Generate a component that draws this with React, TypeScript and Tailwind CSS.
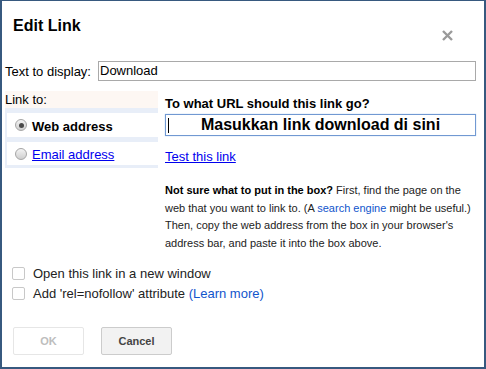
import React from "react";

function Radio({ checked }: { checked?: boolean }) {
  return (
    <span className="w-[12px] h-[12px] rounded-full border border-[#a6a6a6] bg-gradient-to-b from-[#f4f4f4] to-[#cfcfcf] flex items-center justify-center shrink-0">
      {checked && <span className="w-[5px] h-[5px] rounded-full bg-[#4a4a4a]" />}
    </span>
  );
}

function Checkbox() {
  return <span className="w-[13px] h-[13px] border border-[#c8c8c8] rounded-[2px] bg-white shrink-0" />;
}

export default function App() {
  return (
    <div className="w-[486px] h-[369px] bg-white border-[#37597f] border-t border-x-2 border-b-2 font-['Liberation_Sans',Arial,sans-serif] text-[13px] text-black">
      {/* Header */}
      <div className="h-[33px] flex items-start justify-between pl-[11px] pr-[31px]">
        <h1 className="mt-[15px] text-[16px] leading-[20px] font-bold">Edit Link</h1>
        <button type="button" className="mt-[29px] w-[11px] h-[11px]">
          <svg width="11" height="11" viewBox="0 0 11 11">
            <path d="M1 1 L10 10 M10 1 L1 10" stroke="#9a9a9a" strokeWidth="2.4" />
          </svg>
        </button>
      </div>

      {/* Text to display */}
      <div className="mt-[27px] flex items-center pl-[3px] h-[20px]">
        <span className="w-[93px] leading-[20px] mt-px">Text to display:</span>
        <div className="w-[378px] h-[20px] border border-[#a9a9a9] px-px leading-[18px]">Download</div>
      </div>

      {/* Link to */}
      <div className="mt-[10px] flex items-start pl-[3px]">
        <div className="w-[153px]">
          <div className="h-[17px] leading-[17px] bg-[#fdf7f3]">Link to:</div>
          <div className="bg-[#e8eef8] pt-[5px] pb-[3px] pl-[2px] flex flex-col gap-[5px]">
            <div className="h-[24px] bg-white flex items-center pl-[8px]">
              <Radio checked />
              <span className="ml-[5px] mt-[3px] font-bold">Web address</span>
            </div>
            <div className="h-[23px] bg-white flex items-center pl-[8px]">
              <Radio />
              <span className="ml-[5px] mt-[2px] text-[#0000ee] underline">Email address</span>
            </div>
          </div>
        </div>

        <div className="ml-[7px] w-[311px] pt-[5px]">
          <div className="font-bold leading-[16px]">To what URL should this link go?</div>
          <div className="relative mt-[2px] h-[22px] border border-[#7199d2] shadow-[0_0_1px_#9fc0ea] text-center text-[16px] font-bold leading-[20px]">
            <span className="absolute left-[2px] top-[3px] w-px h-[15px] bg-black" />
            Masukkan link download di sini
          </div>
          <div className="mt-[13px] leading-[16px]">
            <span className="text-[#0000ee] underline">Test this link</span>
          </div>
          <p className="mt-[17px] text-[11px] leading-[17.6px] text-[#222] whitespace-nowrap">
            <b className="text-black">Not sure what to put in the box?</b> First, find the page on the
            <br />
            web that you want to link to. (A <span className="text-[#15c]">search engine</span> might be useful.)
            <br />
            Then, copy the web address from the box in your browser's
            <br />
            address bar, and paste it into the box above.
          </p>
        </div>
      </div>

      {/* Options */}
      <div className="mt-[11px] pl-[10px] text-[#222]">
        <div className="h-[20px] flex items-center">
          <Checkbox />
          <span className="ml-[8px]">Open this link in a new window</span>
        </div>
        <div className="h-[20px] flex items-center">
          <Checkbox />
          <span className="ml-[8px]">
            Add 'rel=nofollow' attribute <span className="text-[#15c]">(Learn more)</span>
          </span>
        </div>
      </div>

      {/* Buttons */}
      <div className="mt-[24px] pl-[11px] flex gap-[17px]">
        <button
          type="button"
          className="w-[71px] h-[28px] border border-[#e6e6e6] rounded-[2px] bg-white text-[11px] font-bold text-[#bdbdbd]"
        >
          OK
        </button>
        <button
          type="button"
          className="w-[71px] h-[28px] border border-[#cccccc] rounded-[2px] bg-[#f2f2f2] text-[11px] font-bold text-[#444]"
        >
          Cancel
        </button>
      </div>
    </div>
  );
}
